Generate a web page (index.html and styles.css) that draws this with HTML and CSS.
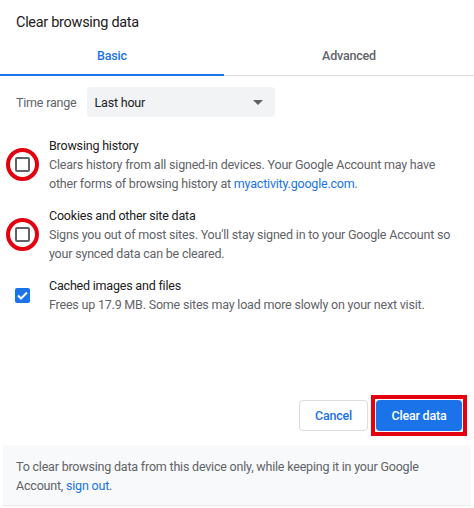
FILE: index.html
```html
<!DOCTYPE html>
<html>
<head>
<meta charset="utf-8">
<link rel="stylesheet" href="styles.css">
</head>
<body>
<div class="dialog">
  <h1 class="title">Clear browsing data</h1>
  <div class="tabs">
    <div class="tab active">Basic</div>
    <div class="tab">Advanced</div>
  </div>
  <div class="range">
    <span class="range-label">Time range</span>
    <div class="select">
      <span>Last hour</span>
      <svg class="arrow" width="10" height="5" viewBox="0 0 10 5"><path d="M0 0h10L5 5z" fill="#5f6368"/></svg>
    </div>
  </div>
  <div class="options">
    <div class="option">
      <div class="box-wrap marked"><span class="box"></span></div>
      <div class="text">
        <div class="name">Browsing history</div>
        <div class="desc">Clears history from all signed-in devices. Your Google Account may have other forms of browsing history at <a class="link">myactivity.google.com</a>.</div>
      </div>
    </div>
    <div class="option">
      <div class="box-wrap marked"><span class="box"></span></div>
      <div class="text">
        <div class="name">Cookies and other site data</div>
        <div class="desc">Signs you out of most sites. You'll stay signed in to your Google Account so your synced data can be cleared.</div>
      </div>
    </div>
    <div class="option">
      <div class="box-wrap"><span class="box checked"><svg width="11" height="9" viewBox="0 0 11 9"><path d="M1 4.5l3 3L10 1.5" fill="none" stroke="#fff" stroke-width="2"/></svg></span></div>
      <div class="text">
        <div class="name">Cached images and files</div>
        <div class="desc">Frees up 17.9 MB. Some sites may load more slowly on your next visit.</div>
      </div>
    </div>
  </div>
  <div class="actions">
    <button class="btn cancel">Cancel</button>
    <div class="highlight"><button class="btn primary">Clear data</button></div>
  </div>
  <div class="footer">To clear browsing data from this device only, while keeping it in your Google Account, <a class="link">sign out</a>.</div>
</div>
</body>
</html>
```
FILE: styles.css
```css
html, body {
  margin: 0;
  padding: 0;
  background: #fff;
}
body {
  font-family: Roboto, "Liberation Sans", Arial, sans-serif;
  color: #202124;
  width: 474px;
  height: 508px;
  overflow: hidden;
  letter-spacing: -0.2px;
}
.dialog {
  display: flex;
  flex-direction: column;
  height: 508px;
}
.title {
  margin: 0;
  padding: 14px 16px 0;
  font-size: 14.5px;
  font-weight: 400;
  line-height: 18px;
  color: #202124;
  letter-spacing: -0.3px;
}
.tabs {
  display: grid;
  grid-template-columns: 224px 1fr;
  margin-top: 16px;
  border-bottom: 1px solid #dadce0;
}
.tab {
  text-align: center;
  font-size: 12.5px;
  font-weight: 500;
  color: #5f6368;
  line-height: 16px;
  padding: 0 0 10px;
  border-bottom: 2px solid transparent;
  margin-bottom: -1px;
}
.tab.active {
  color: #1a73e8;
  border-bottom-color: #1a73e8;
}
.range {
  display: flex;
  align-items: center;
  gap: 10px;
  padding: 11px 16px 0;
}
.range-label {
  font-size: 12.5px;
  color: #5f6368;
}
.select {
  width: 188px;
  height: 30px;
  box-sizing: border-box;
  background: #f1f3f4;
  border-radius: 4px;
  display: flex;
  align-items: center;
  justify-content: space-between;
  padding: 0 8px;
  font-size: 12.5px;
  color: #202124;
}
.arrow {
  margin-right: 4px;
}
.options {
  display: flex;
  flex-direction: column;
  gap: 13px;
  padding: 19px 16px 0 0;
}
.option {
  display: flex;
  align-items: center;
}
.box-wrap {
  width: 33px;
  height: 33px;
  margin: 0 10px 0 6px;
  flex: none;
  box-sizing: border-box;
  display: flex;
  align-items: center;
  justify-content: center;
  border-radius: 50%;
}
.box-wrap.marked {
  border: 4px solid #e3000f;
}
.box {
  width: 15px;
  height: 15px;
  box-sizing: border-box;
  border: 2px solid #5f6368;
  border-radius: 2px;
  display: flex;
  align-items: center;
  justify-content: center;
}
.box.checked {
  background: #1a73e8;
  border-color: #1a73e8;
}
.text {
  flex: 1;
}
.name {
  font-size: 12.5px;
  line-height: 19px;
  color: #202124;
}
.desc {
  font-size: 12.5px;
  line-height: 19px;
  color: #5f6368;
}
.link {
  color: #1a73e8;
  text-decoration: none;
}
.actions {
  display: flex;
  justify-content: flex-end;
  align-items: center;
  gap: 3px;
  margin-top: auto;
  padding: 0 7px 9px 0;
}
.btn {
  font-family: inherit;
  font-size: 12.5px;
  font-weight: 500;
  letter-spacing: -0.2px;
  height: 31px;
  border-radius: 4px;
  padding: 0;
  white-space: nowrap;
  cursor: pointer;
}
.cancel {
  width: 69px;
  background: #fff;
  color: #1a73e8;
  border: 1px solid #dadce0;
}
.highlight {
  border: 4px solid #e3000f;
  padding: 1px;
  display: flex;
}
.primary {
  width: 86px;
  background: #1a73e8;
  color: #fff;
  border: none;
}
.footer {
  background: #f8f9fa;
  margin: 0 3px 2px;
  border-bottom: 1px solid #e8eaed;
  padding: 12px 13px 10px;
  font-size: 12.5px;
  line-height: 19px;
  color: #5f6368;
}
```
